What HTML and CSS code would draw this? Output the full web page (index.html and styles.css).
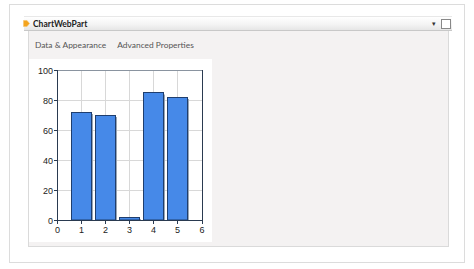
FILE: index.html
```html
<!DOCTYPE html>
<html>
<head>
<meta charset="utf-8">
<link rel="stylesheet" href="styles.css">
</head>
<body>
<div class="frame">
  <div class="webpart">
    <div class="header">
      <svg class="icon" width="7" height="7" viewBox="0 0 7 7"><path d="M0.5 0.5 H4 L6.5 3.5 L4 6.5 H0.5 Z" fill="#f3a41f" stroke="#f6c36a" stroke-width="0.6"/></svg>
      <span class="title">ChartWebPart</span>
      <span class="spacer"></span>
      <span class="arrow">▾</span>
      <span class="check"></span>
    </div>
    <div class="body">
      <div class="tabs">
        <span class="tab">Data &amp; Appearance</span>
        <span class="tab">Advanced Properties</span>
      </div>
      <div class="chart">
        <svg width="183" height="183" viewBox="0 0 183 183">
          <g stroke="#d8d8d8" stroke-width="1">
            <line x1="52.5" y1="11" x2="52.5" y2="161"/>
            <line x1="76.5" y1="11" x2="76.5" y2="161"/>
            <line x1="100.5" y1="11" x2="100.5" y2="161"/>
            <line x1="124.5" y1="11" x2="124.5" y2="161"/>
            <line x1="148.5" y1="11" x2="148.5" y2="161"/>
            <line x1="28" y1="41.5" x2="173" y2="41.5"/>
            <line x1="28" y1="71.5" x2="173" y2="71.5"/>
            <line x1="28" y1="101.5" x2="173" y2="101.5"/>
            <line x1="28" y1="131.5" x2="173" y2="131.5"/>
          </g>
          <rect x="28.5" y="11.5" width="145" height="150" fill="none" stroke="#8a94a0" stroke-width="1"/>
          <g fill="#9aa6b4">
            <rect x="44" y="55" width="20" height="107"/>
            <rect x="68" y="58" width="20" height="104"/>
            <rect x="92" y="160" width="20" height="2"/>
            <rect x="116" y="35.5" width="20" height="126.5"/>
            <rect x="140" y="40" width="20" height="122"/>
          </g>
          <g fill="#4689e8" stroke="#1f3e6e" stroke-width="1">
            <rect x="42.5" y="53.5" width="20" height="107.5"/>
            <rect x="66.5" y="56.5" width="20" height="104.5"/>
            <rect x="90.5" y="158.5" width="20" height="2.5"/>
            <rect x="114.5" y="33.5" width="20" height="127.5"/>
            <rect x="138.5" y="38.5" width="20" height="122.5"/>
          </g>
          <g stroke="#2a3a50" stroke-width="1">
            <line x1="28.5" y1="11" x2="28.5" y2="162"/>
            <line x1="28" y1="161.5" x2="174" y2="161.5"/>
            <line x1="173.5" y1="11" x2="173.5" y2="162"/>
            <line x1="25" y1="11.5" x2="28" y2="11.5"/>
            <line x1="25" y1="41.5" x2="28" y2="41.5"/>
            <line x1="25" y1="71.5" x2="28" y2="71.5"/>
            <line x1="25" y1="101.5" x2="28" y2="101.5"/>
            <line x1="25" y1="131.5" x2="28" y2="131.5"/>
            <line x1="25" y1="161.5" x2="28" y2="161.5"/>
            <line x1="28.5" y1="162" x2="28.5" y2="165"/>
            <line x1="52.5" y1="162" x2="52.5" y2="165"/>
            <line x1="76.5" y1="162" x2="76.5" y2="165"/>
            <line x1="100.5" y1="162" x2="100.5" y2="165"/>
            <line x1="124.5" y1="162" x2="124.5" y2="165"/>
            <line x1="148.5" y1="162" x2="148.5" y2="165"/>
            <line x1="173.5" y1="162" x2="173.5" y2="165"/>
          </g>
          <g class="lbl" text-anchor="end">
            <text x="24" y="14.5">100</text>
            <text x="24" y="44.5">80</text>
            <text x="24" y="74.5">60</text>
            <text x="24" y="104.5">40</text>
            <text x="24" y="134.5">20</text>
            <text x="24" y="164.5">0</text>
          </g>
          <g class="lbl" text-anchor="middle">
            <text x="28.5" y="174">0</text>
            <text x="52.5" y="174">1</text>
            <text x="76.5" y="174">2</text>
            <text x="100.5" y="174">3</text>
            <text x="124.5" y="174">4</text>
            <text x="148.5" y="174">5</text>
            <text x="173" y="174">6</text>
          </g>
        </svg>
      </div>
    </div>
  </div>
</div>
</body>
</html>
```

FILE: styles.css
```css
html, body {
  margin: 0;
  padding: 0;
  background: #ffffff;
}
.frame {
  margin: 4px 0 0 9px;
  border: 1px solid #dcdcdc;
  padding: 11px 0 0 14px;
  box-sizing: border-box;
  width: 456px;
  height: 259px;
}
.webpart {
  width: 428px;
}
.header {
  height: 13px;
  display: flex;
  align-items: center;
  background: linear-gradient(#ffffff, #f3f3f3 60%, #e6e6e6);
  border-top: 1px solid #e8e8e8;
  border-bottom: 1px solid #c8c8c8;
  font-family: Lato, "Liberation Sans", Arial, sans-serif;
}
.icon {
  display: block;
  margin-left: -1px;
  margin-right: 3px;
}
.title {
  font-size: 8.5px;
  font-weight: bold;
  color: #222;
}
.spacer {
  flex: 1;
}
.arrow {
  font-size: 7px;
  color: #333;
  margin-right: 5px;
}
.check {
  width: 8px;
  height: 8px;
  border: 1px solid #888;
  background: #fff;
  margin-right: 1px;
}
.body {
  margin-left: 4px;
  width: 421px;
  height: 216px;
  box-sizing: border-box;
  background: #f4f2f2;
  border: 1px solid #dadada;
  border-top: none;
  display: flex;
  flex-direction: column;
}
.tabs {
  display: flex;
  gap: 11px;
  padding: 9px 0 0 6px;
  height: 28px;
  box-sizing: border-box;
  font-family: Lato, "Liberation Sans", Arial, sans-serif;
  font-size: 8.4px;
  color: #555;
}
.chart {
  width: 183px;
  height: 183px;
  background: #ffffff;
}
.chart svg {
  display: block;
}
.lbl {
  font-family: "Liberation Sans", Arial, sans-serif;
  font-size: 9px;
  fill: #222;
}
```
